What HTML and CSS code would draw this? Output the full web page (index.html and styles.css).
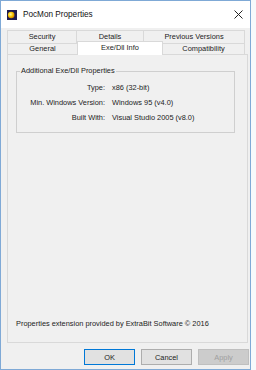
FILE: index.html
```html
<!DOCTYPE html>
<html>
<head>
<meta charset="utf-8">
<link rel="stylesheet" href="styles.css">
</head>
<body>
<div class="window">
  <div class="titlebar">
    <svg class="appicon" width="10" height="10" viewBox="0 0 10 10">
      <defs>
        <radialGradient id="g" cx="0.4" cy="0.4" r="0.6">
          <stop offset="0" stop-color="#fff6a0"/>
          <stop offset="0.6" stop-color="#f5c400"/>
          <stop offset="1" stop-color="#d08000"/>
        </radialGradient>
      </defs>
      <rect width="10" height="10" fill="#1e1b4f"/>
      <circle cx="4.2" cy="5" r="3.3" fill="url(#g)"/>
    </svg>
    <span class="title">PocMon Properties</span>
    <svg class="close" width="9" height="9" viewBox="0 0 9 9">
      <path d="M0.5 0.5 L8.5 8.5 M8.5 0.5 L0.5 8.5" stroke="#222" stroke-width="1" fill="none"/>
    </svg>
  </div>
  <div class="tabs">
    <div class="tabrow row1">
      <div class="tab">Security</div>
      <div class="tab">Details</div>
      <div class="tab">Previous Versions</div>
    </div>
    <div class="tabrow row2">
      <div class="tab">General</div>
      <div class="tab selected">Exe/Dll Info</div>
      <div class="tab">Compatibility</div>
    </div>
  </div>
  <div class="panel">
    <fieldset class="group">
      <legend>Additional Exe/Dll Properties</legend>
      <div class="props">
        <span class="lbl">Type:</span><span class="val">x86 (32-bit)</span>
        <span class="lbl">Min. Windows Version:</span><span class="val">Windows 95 (v4.0)</span>
        <span class="lbl">Built With:</span><span class="val">Visual Studio 2005 (v8.0)</span>
      </div>
    </fieldset>
    <div class="footer">Properties extension provided by ExtraBit Software © 2016</div>
  </div>
  <div class="buttons">
    <div class="btn default">OK</div>
    <div class="btn">Cancel</div>
    <div class="btn disabled">Apply</div>
  </div>
</div>
</body>
</html>
```
FILE: styles.css
```css
html, body {
  margin: 0;
  padding: 0;
}
body {
  width: 256px;
  height: 370px;
  background: #f7f9fb;
  font-family: "Liberation Sans", Arial, sans-serif;
  font-size: 7.4px;
  color: #222;
  overflow: hidden;
}
.window {
  width: 249px;
  height: 368px;
  border: 1px solid #7fa9d6;
  background: #f0f0f0;
  display: flex;
  flex-direction: column;
}
.titlebar {
  height: 27px;
  background: #ffffff;
  display: flex;
  align-items: center;
  padding-left: 6px;
  padding-right: 4px;
}
.appicon {
  flex: none;
}
.title {
  margin-left: 6px;
  font-size: 8.2px;
  color: #111;
  flex: 1;
}
.close {
  margin-right: 3px;
}
.tabs {
  margin: 2px 0 0 6px;
  width: 238px;
}
.tabrow {
  display: grid;
}
.row1 {
  grid-template-columns: 70px 67px 101px;
  height: 13px;
}
.row2 {
  grid-template-columns: 71px 85px 82px;
  height: 11px;
}
.tab {
  border: 1px solid #d9d9d9;
  border-bottom: none;
  margin-left: -1px;
  background: #f0f0f0;
  display: flex;
  align-items: center;
  justify-content: center;
  line-height: 1;
}
.row1 .tab:first-child, .row2 .tab:first-child {
  margin-left: 0;
}
.tab.selected {
  background: #ffffff;
  margin-top: -2px;
  margin-bottom: -1px;
  position: relative;
  z-index: 1;
  align-items: flex-start;
  padding-top: 2px;
}
.panel {
  margin-left: 6px;
  width: 239px;
  height: 287px;
  border: 1px solid #d9d9d9;
  background: #f0f0f0;
  display: flex;
  flex-direction: column;
}
.group {
  margin: 12px 0 0 8px;
  width: 219px;
  height: 66px;
  box-sizing: border-box;
  border: 1px solid #cfcfcf;
  padding: 0;
}
.group legend {
  margin-left: 3px;
  padding: 0 1px;
  line-height: 8px;
}
.props {
  display: grid;
  grid-template-columns: 88px auto;
  column-gap: 7px;
  row-gap: 6px;
  margin-top: 8px;
  line-height: 9px;
}
.lbl {
  text-align: right;
}
.footer {
  margin-top: auto;
  margin-left: 8px;
  margin-bottom: 14px;
}
.buttons {
  display: flex;
  justify-content: flex-end;
  gap: 6px;
  margin-top: 6px;
  padding-right: 1px;
}
.btn {
  width: 49px;
  height: 14px;
  border: 1px solid #adadad;
  background: #e1e1e1;
  display: flex;
  align-items: center;
  justify-content: center;
}
.btn.default {
  border-color: #0078d7;
}
.btn.disabled {
  background: #cccccc;
  border-color: #bfbfbf;
  color: #a0a0a0;
}
```
